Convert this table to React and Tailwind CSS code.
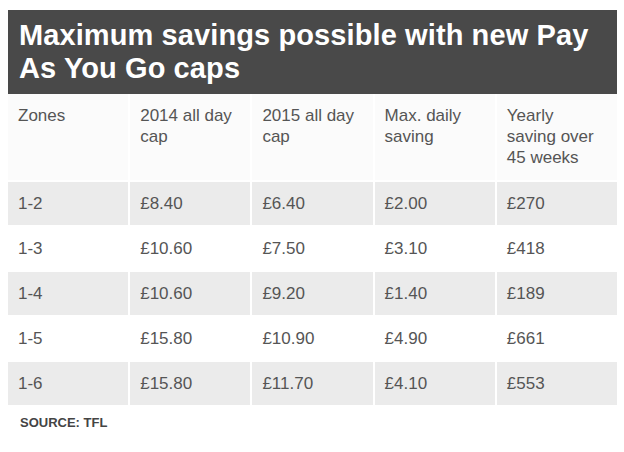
import React from "react";

const headers = [
  ["Zones"],
  ["2014 all day", "cap"],
  ["2015 all day", "cap"],
  ["Max. daily", "saving"],
  ["Yearly", "saving over", "45 weeks"],
];

const rows = [
  ["1-2", "£8.40", "£6.40", "£2.00", "£270"],
  ["1-3", "£10.60", "£7.50", "£3.10", "£418"],
  ["1-4", "£10.60", "£9.20", "£1.40", "£189"],
  ["1-5", "£15.80", "£10.90", "£4.90", "£661"],
  ["1-6", "£15.80", "£11.70", "£4.10", "£553"],
];

export default function App() {
  return (
    <div className="w-[624px] h-[452px] bg-white pt-[10px] pl-[8px] pr-[7px] font-['Liberation_Sans',Arial,sans-serif]">
      {/* Title bar */}
      <div className="bg-[#494949] pl-[11px] pr-3 pt-[9px] pb-[9px]">
        <h1 className="text-white font-bold text-[29px] leading-[33px] tracking-[0.1px]">
          Maximum savings possible with new Pay
          <br />
          As You Go caps
        </h1>
      </div>

      {/* Table */}
      <div className="flex flex-col gap-[2px] text-[17px] text-[#555555]">
        <div className="grid grid-cols-5 gap-[2px]">
          {headers.map((h) => (
            <div
              key={h[0]}
              className="bg-[#fbfbfb] pl-[10px] pr-2 pt-[11px] pb-3 leading-[21px] h-[86px]"
            >
              {h.map((line) => (
                <div key={line}>{line}</div>
              ))}
            </div>
          ))}
        </div>
        {rows.map((r, i) => (
          <div key={r[0]} className="grid grid-cols-5 gap-[2px]">
            {r.map((c, j) => (
              <div
                key={j}
                className={
                  "h-[43px] flex items-center pl-[10px] " +
                  (i % 2 === 0 ? "bg-[#ebebeb]" : "bg-white")
                }
              >
                {c}
              </div>
            ))}
          </div>
        ))}
      </div>

      <div className="mt-[10px] pl-[12px] text-[13px] leading-4 font-bold text-[#444444]">
        SOURCE: TFL
      </div>
    </div>
  );
}
